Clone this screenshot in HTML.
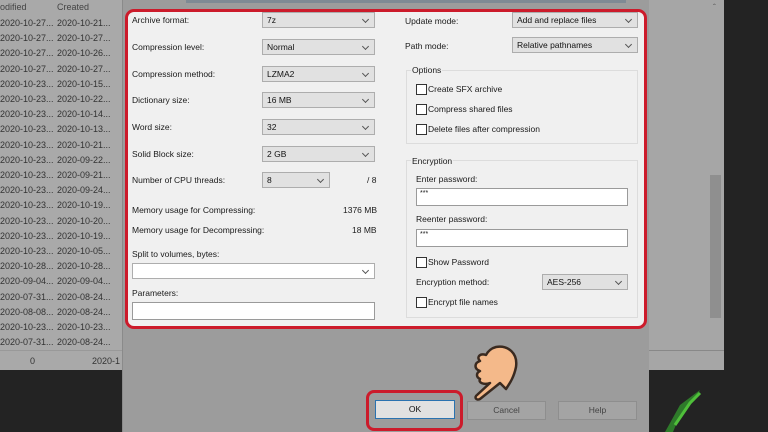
<!DOCTYPE html>
<html><head><style>
*{margin:0;padding:0;box-sizing:border-box}
body{width:768px;height:432px;overflow:hidden;background:#232323;position:relative;font-family:"Liberation Sans",sans-serif;font-size:8.5px;color:#111}
.a{position:absolute}
.l{position:absolute;font-size:8.5px;color:#1a1a1a;white-space:nowrap}
.cb{position:absolute;height:16px;background:#e1e1e1;border:1px solid #adadad;padding:2px 4px;font-size:8.5px}
.cb::after{content:"";position:absolute;right:6px;top:4px;width:4px;height:4px;border-right:1px solid #555;border-bottom:1px solid #555;transform:rotate(45deg)}
.tb{position:absolute;background:#fff;border:1px solid #9a9a9a}
.ck{position:absolute;width:11px;height:11px;border:1px solid #333;background:#fff}
.lst{position:absolute;font-size:9px;color:#333;white-space:nowrap}
.btn{position:absolute;height:19px;background:#c4c4c4;border:1px solid #adadad;text-align:center;font-size:8.5px;line-height:17px;color:#333}
</style></head><body>
<div class="a" style="left:0;top:0;width:122px;height:370px;background:#a9a9a9"></div>
<div class="a" style="left:0;top:350px;width:122px;height:1px;background:#999"></div>
<div class="lst" style="left:0;top:2px;color:#444">odified</div>
<div class="lst" style="left:57px;top:2px;color:#444">Created</div>
<div id="rows"></div>
<div class="lst" style="left:30px;top:356px">0</div>
<div class="lst" style="left:92px;top:356px">2020-1</div>
<div class="a" style="left:122px;top:0;width:527px;height:432px;background:#9c9c9c;border-left:1px solid #8a8a8a"></div>
<div class="a" style="left:186px;top:0;width:440px;height:3px;background:#7f8a94"></div>
<div class="a" style="left:649px;top:0;width:75px;height:370px;background:#a6a6a6"></div>
<div class="a" style="left:649px;top:350px;width:75px;height:1px;background:#888"></div>
<div class="a" style="left:710px;top:175px;width:11px;height:143px;background:#8f8f8f"></div>
<div class="l" style="left:713px;top:2px;color:#555">&#710;</div>
<svg class="a" style="left:655px;top:375px" width="60" height="57"><path d="M10 57 L25 30 L45 15 L40 25 L25 40 L18 57Z" fill="#2e7a2a"/><path d="M20 50 L35 28 L45 18" stroke="#4fbf3a" stroke-width="3" fill="none"/></svg>
<div class="a" style="left:125px;top:9px;width:522px;height:320px;background:#f0f0f0;border:3px solid #cc1b2b;border-radius:9px"></div>
<div class="l" style="left:132px;top:15px">Archive format:</div><div class="cb" style="left:262px;top:12px;width:113px">7z</div>
<div class="l" style="left:132px;top:42px">Compression level:</div><div class="cb" style="left:262px;top:39px;width:113px">Normal</div>
<div class="l" style="left:132px;top:69px">Compression method:</div><div class="cb" style="left:262px;top:66px;width:113px">LZMA2</div>
<div class="l" style="left:132px;top:95px">Dictionary size:</div><div class="cb" style="left:262px;top:92px;width:113px">16 MB</div>
<div class="l" style="left:132px;top:122px">Word size:</div><div class="cb" style="left:262px;top:119px;width:113px">32</div>
<div class="l" style="left:132px;top:149px">Solid Block size:</div><div class="cb" style="left:262px;top:146px;width:113px">2 GB</div>
<div class="l" style="left:132px;top:175px">Number of CPU threads:</div><div class="cb" style="left:262px;top:172px;width:68px">8</div>
<div class="l" style="left:367px;top:175px">/ 8</div>
<div class="l" style="left:132px;top:205px">Memory usage for Compressing:</div><div class="l" style="left:343px;top:205px">1376 MB</div>
<div class="l" style="left:132px;top:225px">Memory usage for Decompressing:</div><div class="l" style="left:352px;top:225px">18 MB</div>
<div class="l" style="left:132px;top:249px">Split to volumes, bytes:</div>
<div class="cb" style="left:132px;top:263px;width:243px;background:#fff"></div>
<div class="l" style="left:132px;top:288px">Parameters:</div>
<div class="tb" style="left:132px;top:302px;width:243px;height:18px"></div>
<div class="l" style="left:405px;top:16px">Update mode:</div><div class="cb" style="left:512px;top:12px;width:126px">Add and replace files</div>
<div class="l" style="left:405px;top:41px">Path mode:</div><div class="cb" style="left:512px;top:37px;width:126px">Relative pathnames</div>
<div class="a" style="left:406px;top:70px;width:232px;height:74px;border:1px solid #dcdcdc"></div>
<div class="l" style="left:411px;top:65px;background:#f0f0f0;padding:0 1px">Options</div>
<div class="ck" style="left:416px;top:84px"></div><div class="l" style="left:428px;top:84px">Create SFX archive</div>
<div class="ck" style="left:416px;top:104px"></div><div class="l" style="left:428px;top:104px">Compress shared files</div>
<div class="ck" style="left:416px;top:124px"></div><div class="l" style="left:428px;top:124px">Delete files after compression</div>
<div class="a" style="left:406px;top:160px;width:232px;height:158px;border:1px solid #dcdcdc"></div>
<div class="l" style="left:411px;top:156px;background:#f0f0f0;padding:0 1px">Encryption</div>
<div class="l" style="left:416px;top:174px">Enter password:</div>
<div class="tb" style="left:416px;top:188px;width:212px;height:18px;font-size:7px;padding:1px 3px">***</div>
<div class="l" style="left:416px;top:214px">Reenter password:</div>
<div class="tb" style="left:416px;top:229px;width:212px;height:18px;font-size:7px;padding:1px 3px">***</div>
<div class="ck" style="left:416px;top:257px"></div><div class="l" style="left:428px;top:257px">Show Password</div>
<div class="l" style="left:416px;top:277px">Encryption method:</div><div class="cb" style="left:542px;top:274px;width:86px">AES-256</div>
<div class="ck" style="left:416px;top:297px"></div><div class="l" style="left:428px;top:297px">Encrypt file names</div>
<div class="a" style="left:366px;top:390px;width:97px;height:41px;border:3px solid #cc1b2b;border-radius:8px;background:#9c9c9c"></div>
<div class="btn" style="left:375px;top:400px;width:80px;background:#e1e1e1;border:1px solid #2a72b0;color:#111">OK</div>
<div class="btn" style="left:467px;top:401px;width:79px;background:#a4a4a4;border-color:#8e8e8e;color:#444">Cancel</div>
<div class="btn" style="left:558px;top:401px;width:79px;background:#a4a4a4;border-color:#8e8e8e;color:#444">Help</div>
<svg class="a" style="left:466px;top:343px" width="56" height="62" viewBox="0 0 56 62">
<path d="M30 4 C42 2 52 10 50 24 C48 34 44 40 40 46 L34 40 L14 56 C10 58 8 54 11 52 L24 40 C18 42 12 40 14 36 C10 34 10 30 14 28 C8 26 8 20 14 18 C10 14 14 10 20 12 C22 8 26 5 30 4Z" fill="#f4b98a" stroke="#3a2a20" stroke-width="2.5" stroke-linejoin="round"/>
</svg>
<script>
var d=[["27","21"],["27","27"],["27","26"],["27","27"],["23","15"],["23","22"],["23","14"],["23","13"],["23","21"],["23","09-22"],["23","09-21"],["23","09-24"],["23","19"],["23","20"],["23","19"],["23","05"],["28","28"],["09-04","09-04"],["07-31","08-24"],["08-08","08-24"],["23","23"],["07-31","08-24"]];
var h="";for(var i=0;i<d.length;i++){var a=d[i][0].length>2?"2020-"+d[i][0]:"2020-10-"+d[i][0];var b=d[i][1].length>2?"2020-"+d[i][1]:"2020-10-"+d[i][1];h+='<div class="lst" style="left:0;top:'+(18+i*15.2)+'px">'+a+'...</div><div class="lst" style="left:57px;top:'+(18+i*15.2)+'px">'+b+'...</div>';}
document.getElementById("rows").innerHTML=h;
</script>
</body></html>
